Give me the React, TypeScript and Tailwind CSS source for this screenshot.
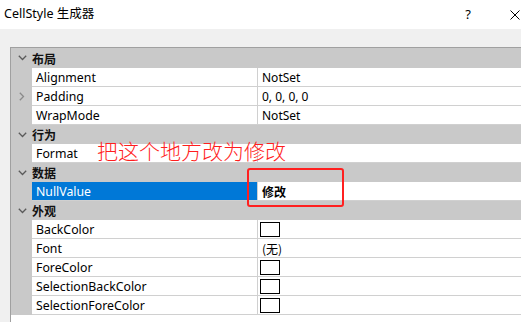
import React from "react";

type Row =
  | { kind: "cat"; label: string }
  | { kind: "prop"; name: string; value?: string; swatch?: boolean; expand?: boolean; selected?: boolean };

const rows: Row[] = [
  { kind: "cat", label: "布局" },
  { kind: "prop", name: "Alignment", value: "NotSet" },
  { kind: "prop", name: "Padding", value: "0, 0, 0, 0", expand: true },
  { kind: "prop", name: "WrapMode", value: "NotSet" },
  { kind: "cat", label: "行为" },
  { kind: "prop", name: "Format", value: "" },
  { kind: "cat", label: "数据" },
  { kind: "prop", name: "NullValue", value: "修改", selected: true },
  { kind: "cat", label: "外观" },
  { kind: "prop", name: "BackColor", swatch: true },
  { kind: "prop", name: "Font", value: "(无)" },
  { kind: "prop", name: "ForeColor", swatch: true },
  { kind: "prop", name: "SelectionBackColor", swatch: true },
  { kind: "prop", name: "SelectionForeColor", swatch: true },
];

function ChevronDown() {
  return (
    <svg width="9" height="6" viewBox="0 0 9 6" className="block">
      <path d="M0.8 0.8 L4.5 4.5 L8.2 0.8" fill="none" stroke="#5a5a5a" strokeWidth="1.3" />
    </svg>
  );
}

function ChevronRight() {
  return (
    <svg width="6" height="9" viewBox="0 0 6 9" className="block">
      <path d="M0.8 0.8 L4.5 4.5 L0.8 8.2" fill="none" stroke="#8a8a8a" strokeWidth="1.3" />
    </svg>
  );
}

export default function App() {
  return (
    <div
      className="relative w-[521px] h-[322px] overflow-hidden bg-[#f0f0f0] flex flex-col text-[12px] text-black"
      style={{ fontFamily: '"Noto Sans", "Noto Sans CJK SC", sans-serif' }}
    >
      {/* Title bar */}
      <div className="h-[29px] bg-white flex items-center shrink-0">
        <span className="pl-[4px] leading-none text-[12.5px]">CellStyle 生成器</span>
        <span className="ml-auto mr-[39px] text-[13px] leading-none">?</span>
        <svg width="10" height="10" viewBox="0 0 10 10" className="mr-[1px]">
          <path d="M0.5 0.5 L9.5 9.5 M9.5 0.5 L0.5 9.5" stroke="#000" strokeWidth="1" />
        </svg>
      </div>

      {/* Property grid */}
      <div className="mt-[18px] ml-[10px] flex-1 bg-white border-l border-t border-[#a0a0a0] flex flex-col">
        {rows.map((r, i) =>
          r.kind === "cat" ? (
            <div
              key={i}
              className={`${i === 0 ? "h-[20px]" : "h-[19px]"} bg-[#c9c9c9] flex items-center shrink-0`}
            >
              <div className="w-[21px] flex justify-center pl-[1px]">
                <ChevronDown />
              </div>
              <span
                className="font-bold leading-none text-[#111] pt-[1px]"
                style={{ fontFamily: '"Noto Sans CJK SC", sans-serif' }}
              >
                {r.label}
              </span>
            </div>
          ) : (
            <div key={i} className="h-[19px] flex shrink-0">
              <div className="w-[21px] bg-[#c9c9c9] flex items-center justify-center">
                {r.expand && <ChevronRight />}
              </div>
              <div
                className={`w-[226px] border-b border-r border-[#d0d0d0] flex items-center pl-[4px] ${
                  r.selected ? "bg-[#0078d7] text-white" : ""
                }`}
              >
                <span className="leading-none pt-[2px] text-[12.3px]">{r.name}</span>
              </div>
              <div className="flex-1 border-b border-[#d0d0d0] flex items-center pl-[4px]">
                {r.swatch ? (
                  <div className="ml-[-2px] w-[20px] h-[15px] border border-black bg-white" />
                ) : (
                  <span
                    className={`leading-none pt-[2px] ${r.selected ? "font-bold" : ""}`}
                    style={
                      r.value && /[\u4e00-\u9fff]/.test(r.value)
                        ? { fontFamily: '"Noto Sans CJK SC", sans-serif' }
                        : undefined
                    }
                  >
                    {r.value}
                  </span>
                )}
              </div>
            </div>
          )
        )}
      </div>

      {/* Annotation overlay */}
      <div
        className="absolute left-[97px] top-[140px] text-[21px] leading-none text-[#ff1e1e] whitespace-nowrap"
        style={{ fontFamily: '"Noto Sans CJK SC", sans-serif', fontWeight: 300 }}
      >
        把这个地方改为修改
      </div>
      <div className="absolute left-[247px] top-[168px] w-[97px] h-[39px] border-2 border-[#ff2020] rounded-[3px]" />
    </div>
  );
}
